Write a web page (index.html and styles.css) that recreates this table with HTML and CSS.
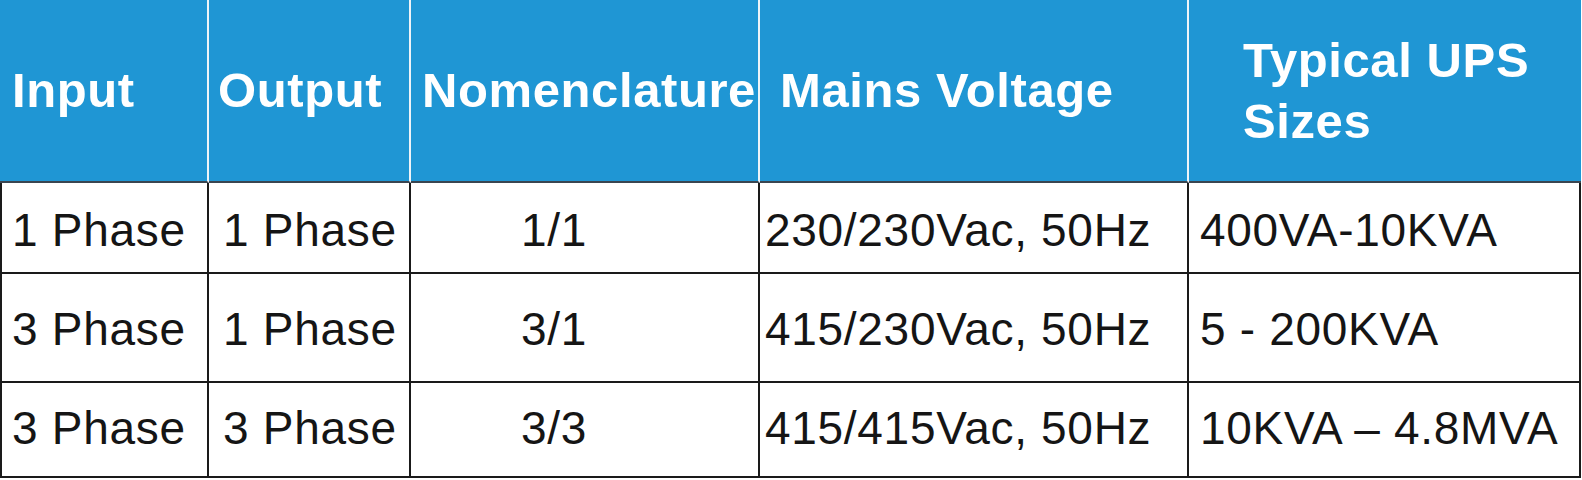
FILE: index.html
```html
<!DOCTYPE html>
<html lang="en">
<head>
<meta charset="utf-8">
<title>UPS Phase Configurations</title>
<link rel="stylesheet" href="styles.css">
</head>
<body>
<table class="ups">
  <colgroup>
    <col class="w1"><col class="w2"><col class="w3"><col class="w4"><col class="w5">
  </colgroup>
  <thead>
    <tr>
      <th class="h1">Input</th>
      <th class="h2">Output</th>
      <th class="h3">Nomenclature</th>
      <th class="h4">Mains Voltage</th>
      <th class="h5">Typical UPS<br>Sizes</th>
    </tr>
  </thead>
  <tbody>
    <tr class="r1">
      <td class="c1">1 Phase</td>
      <td class="c2">1 Phase</td>
      <td class="c3">1/1</td>
      <td class="c4">230/230Vac, 50Hz</td>
      <td class="c5">400VA-10KVA</td>
    </tr>
    <tr class="r2">
      <td class="c1">3 Phase</td>
      <td class="c2">1 Phase</td>
      <td class="c3">3/1</td>
      <td class="c4">415/230Vac, 50Hz</td>
      <td class="c5">5 - 200KVA</td>
    </tr>
    <tr class="r3">
      <td class="c1">3 Phase</td>
      <td class="c2">3 Phase</td>
      <td class="c3">3/3</td>
      <td class="c4">415/415Vac, 50Hz</td>
      <td class="c5">10KVA – 4.8MVA</td>
    </tr>
  </tbody>
</table>
</body>
</html>
```

FILE: styles.css
```css
html, body {
  margin: 0;
  padding: 0;
  background: #ffffff;
}

.ups {
  table-layout: fixed;
  border-collapse: separate;
  border-spacing: 0;
  width: 1581px;
  font-family: "Liberation Sans", Arial, Helvetica, sans-serif;
}

.w1 { width: 209px; }
.w2 { width: 202px; }
.w3 { width: 349px; }
.w4 { width: 429px; }
.w5 { width: 392px; }

.ups th,
.ups td {
  box-sizing: border-box;
  padding: 0;
  text-align: left;
  white-space: nowrap;
  overflow: hidden;
}

.ups th {
  height: 183px;
  background: #1f96d4;
  color: #ffffff;
  font-size: 49px;
  font-weight: bold;
  line-height: 61px;
  letter-spacing: 0.6px;
  vertical-align: middle;
  border-right: 2px solid #eef4f8;
  border-bottom: 2px solid #3a4550;
}

.ups th.h5 {
  border-right: 0;
}

.ups th.h1 { padding-left: 12px; }
.ups th.h2 { padding-left: 9px; }
.ups th.h3 { padding-left: 11px; }
.ups th.h4 { padding-left: 20px; }
.ups th.h5 { padding-left: 54px; }

.ups td {
  color: #151515;
  font-size: 46px;
  line-height: 52px;
  letter-spacing: 0.7px;
  vertical-align: top;
  border-right: 2px solid #1a1a1a;
  border-bottom: 2px solid #1a1a1a;
}

.ups td.c1 {
  border-left: 2px solid #1a1a1a;
}

.r1 td { height: 91px; padding-top: 21px; }
.r2 td { height: 109px; padding-top: 29px; }
.r3 td { height: 95px; padding-top: 19px; }

.ups td.c1 { padding-left: 10px; }
.ups td.c2 { padding-left: 14px; }
.ups td.c3 { padding-left: 110px; }
.ups td.c4 { padding-left: 5px; }
.ups td.c5 { padding-left: 11px; }
```
